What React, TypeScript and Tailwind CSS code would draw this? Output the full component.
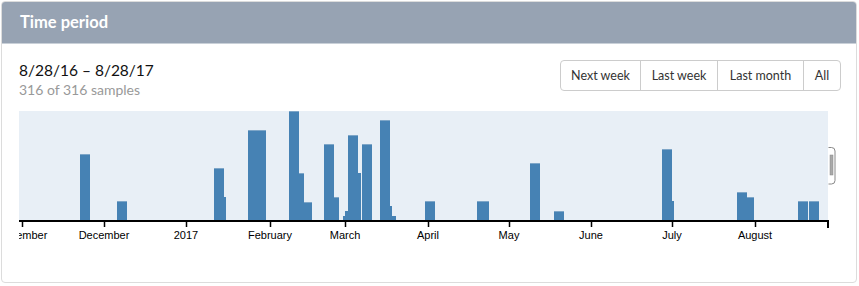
import React from 'react';

const bars: [number, number, number][] = [
  [80, 10, 154], [117, 10, 201], [214, 10, 168], [224, 2, 197], [248, 18, 130],
  [289, 10, 111], [299, 5, 173], [304, 8, 202], [324, 10, 144], [334, 5, 197],
  [343, 2, 216], [345, 3, 211], [348, 10, 135], [358, 3, 173], [362, 10, 144],
  [380, 10, 120], [390, 2, 206], [392, 4, 216], [425, 10, 201], [477, 12, 201],
  [530, 10, 163], [554, 10, 211], [662, 10, 149], [672, 2, 201], [737, 10, 192],
  [747, 7, 197], [798, 10, 201], [809, 10, 201],
];

const ticks: [number, string][] = [
  [22, 'November'], [104, 'December'], [186, '2017'], [270, 'February'],
  [345, 'March'], [428, 'April'], [509, 'May'], [591, 'June'],
  [672, 'July'], [755, 'August'],
];

const ranges = [
  { label: 'Next week', w: 'w-[79px]' },
  { label: 'Last week', w: 'w-[77px] border-l' },
  { label: 'Last month', w: 'w-[86px] border-l' },
  { label: 'All', w: 'w-[37px] border-l' },
];

const Histogram = () => (
  <svg width={821} height={135} viewBox="19 111 821 135" className="block">
    <rect x={19} y={111} width={809} height={110} fill="#e8eff6" />
    {bars.map(([x, w, top], i) => (
      <g key={i}>
        <rect x={x} y={top} width={w} height={220 - top} fill="#4682b4" />
        {w >= 5 && <rect x={x} y={top} width={w} height={1} fill="#7ea6c8" />}
      </g>
    ))}
    <rect x={19} y={220} width={810} height={2} fill="#000" />
    {ticks.map(([x, label]) => (
      <g key={label}>
        <line x1={x + 0.5} x2={x + 0.5} y1={221} y2={227} stroke="#000" strokeWidth={1.5} />
        <text
          x={x}
          y={239}
          textAnchor="middle"
          fontSize={11}
          fontFamily="'Liberation Sans', Arial, sans-serif"
          fill="#000"
        >
          {label}
        </text>
      </g>
    ))}
    <line x1={828} x2={828} y1={220} y2={228} stroke="#000" strokeWidth={2} />
    <path
      d="M828.5 147.5 h3 a3.5 3.5 0 0 1 3.5 3.5 v29.5 a3.5 3.5 0 0 1 -3.5 3.5 h-3"
      fill="#fff"
      stroke="#888"
      strokeWidth={1}
    />
    <rect x={830} y={155} width={3} height={20} fill="#a9a9a9" stroke="#888" strokeWidth={0.5} />
  </svg>
);

export default function App() {
  return (
    <div className="p-px bg-white" style={{ fontFamily: 'Lato, "Open Sans", sans-serif' }}>
      <div className="w-[856px] h-[282px] border border-[#dcdcdc] rounded-[4px] overflow-hidden bg-white">
        <div className="h-[42px] flex items-center pl-[18px] bg-[#97a3b3] border-b border-[#c9d0d8]">
          <span className="text-white font-bold text-[16.5px]">Time period</span>
        </div>
        <div className="pl-[17px] pr-[15px] pt-[16px]">
          <div className="flex justify-between h-[40px]">
            <div>
              <div className="text-[15.5px] leading-[20px] text-[#111]">8/28/16 – 8/28/17</div>
              <div className="text-[14px] leading-[20px] text-[#999]">316 of 316 samples</div>
            </div>
            <div className="flex h-[31px] border border-[#ccc] rounded-[4px] bg-white">
              {ranges.map((r) => (
                <button
                  key={r.label}
                  className={`${r.w} border-[#ccc] text-[12.5px] leading-none text-[#333] flex items-center justify-center pt-px`}
                >
                  {r.label}
                </button>
              ))}
            </div>
          </div>
          <div className="mt-[11px]">
            <Histogram />
          </div>
        </div>
      </div>
    </div>
  );
}
